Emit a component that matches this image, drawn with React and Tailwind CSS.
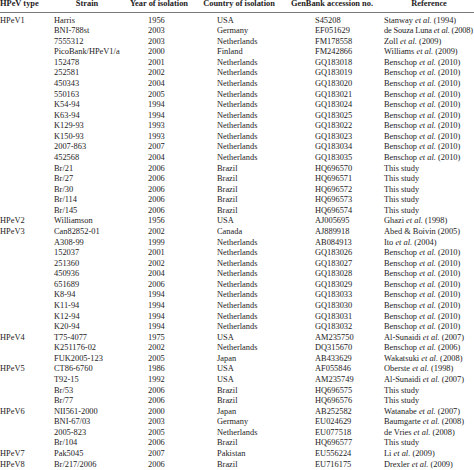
import React from "react";

const rows = [
  ["HPeV1", "Harris", "1956", "USA", "S45208", ["Stanway", " (1994)"]],
  ["", "BNI-788st", "2003", "Germany", "EF051629", ["de Souza Luna", " (2008)"]],
  ["", "7555312", "2003", "Netherlands", "FM178558", ["Zoll", " (2009)"]],
  ["", "PicoBank/HPeV1/a", "2000", "Finland", "FM242866", ["Williams", " (2009)"]],
  ["", "152478", "2001", "Netherlands", "GQ183018", ["Benschop", " (2010)"]],
  ["", "252581", "2002", "Netherlands", "GQ183019", ["Benschop", " (2010)"]],
  ["", "450343", "2004", "Netherlands", "GQ183020", ["Benschop", " (2010)"]],
  ["", "550163", "2005", "Netherlands", "GQ183021", ["Benschop", " (2010)"]],
  ["", "K54-94", "1994", "Netherlands", "GQ183024", ["Benschop", " (2010)"]],
  ["", "K63-94", "1994", "Netherlands", "GQ183025", ["Benschop", " (2010)"]],
  ["", "K129-93", "1993", "Netherlands", "GQ183022", ["Benschop", " (2010)"]],
  ["", "K150-93", "1993", "Netherlands", "GQ183023", ["Benschop", " (2010)"]],
  ["", "2007-863", "2007", "Netherlands", "GQ183034", ["Benschop", " (2010)"]],
  ["", "452568", "2004", "Netherlands", "GQ183035", ["Benschop", " (2010)"]],
  ["", "Br/21", "2006", "Brazil", "HQ696570", "This study"],
  ["", "Br/27", "2006", "Brazil", "HQ696571", "This study"],
  ["", "Br/30", "2006", "Brazil", "HQ696572", "This study"],
  ["", "Br/114", "2006", "Brazil", "HQ696573", "This study"],
  ["", "Br/145", "2006", "Brazil", "HQ696574", "This study"],
  ["HPeV2", "Williamson", "1956", "USA", "AJ005695", ["Ghazi", " (1998)"]],
  ["HPeV3", "Can82852-01", "2002", "Canada", "AJ889918", "Abed & Boivin (2005)"],
  ["", "A308-99", "1999", "Netherlands", "AB084913", ["Ito", " (2004)"]],
  ["", "152037", "2001", "Netherlands", "GQ183026", ["Benschop", " (2010)"]],
  ["", "251360", "2002", "Netherlands", "GQ183027", ["Benschop", " (2010)"]],
  ["", "450936", "2004", "Netherlands", "GQ183028", ["Benschop", " (2010)"]],
  ["", "651689", "2006", "Netherlands", "GQ183029", ["Benschop", " (2010)"]],
  ["", "K8-94", "1994", "Netherlands", "GQ183033", ["Benschop", " (2010)"]],
  ["", "K11-94", "1994", "Netherlands", "GQ183030", ["Benschop", " (2010)"]],
  ["", "K12-94", "1994", "Netherlands", "GQ183031", ["Benschop", " (2010)"]],
  ["", "K20-94", "1994", "Netherlands", "GQ183032", ["Benschop", " (2010)"]],
  ["HPeV4", "T75-4077", "1975", "USA", "AM235750", ["Al-Sunaidi", " (2007)"]],
  ["", "K251176-02", "2002", "Netherlands", "DQ315670", ["Benschop", " (2006)"]],
  ["", "FUK2005-123", "2005", "Japan", "AB433629", ["Wakatsuki", " (2008)"]],
  ["HPeV5", "CT86-6760", "1986", "USA", "AF055846", ["Oberste", " (1998)"]],
  ["", "T92-15", "1992", "USA", "AM235749", ["Al-Sunaidi", " (2007)"]],
  ["", "Br/53", "2006", "Brazil", "HQ696575", "This study"],
  ["", "Br/77", "2006", "Brazil", "HQ696576", "This study"],
  ["HPeV6", "NII561-2000", "2000", "Japan", "AB252582", ["Watanabe", " (2007)"]],
  ["", "BNI-67/03", "2003", "Germany", "EU024629", ["Baumgarte", " (2008)"]],
  ["", "2005-823", "2005", "Netherlands", "EU077518", ["de Vries", " (2008)"]],
  ["", "Br/104", "2006", "Brazil", "HQ696577", "This study"],
  ["HPeV7", "Pak5045", "2007", "Pakistan", "EU556224", ["Li", " (2009)"]],
  ["HPeV8", "Br/217/2006", "2006", "Brazil", "EU716175", ["Drexler", " (2009)"]],
];

function Ref({ r }) {
  if (typeof r === "string") return <>{r}</>;
  return (
    <>
      {r[0]} <i>et al.</i>
      {r[1]}
    </>
  );
}

const PITCH = 10.57;

export default function App() {
  return (
    <div
      className="w-[474px] h-[470px] overflow-hidden bg-white text-[#1e1b1c] text-[8.4px]"
      style={{ fontFamily: '"Liberation Serif", "Times New Roman", serif' }}
    >
      <div className="grid grid-cols-[54px_66px_78px_82px_104px_90px] font-bold leading-[8px] h-[13px] border-b border-[#7a7a7a] whitespace-nowrap">
        <div className="text-left">HPeV type</div>
        <div className="text-center">Strain</div>
        <div className="text-center">Year of isolation</div>
        <div className="text-center">Country of isolation</div>
        <div className="text-center">GenBank accession no.</div>
        <div className="text-center">Reference</div>
      </div>
      <div className="flex flex-col pt-[2px] whitespace-nowrap">
        {rows.map((r, i) => {
          const h = Math.round((i + 1) * PITCH) - Math.round(i * PITCH);
          return (
            <div
              key={i}
              className={
                h === 11
                  ? "grid grid-cols-[54px_94px_69px_98px_69px_90px] h-[11px] leading-[11px]"
                  : "grid grid-cols-[54px_94px_69px_98px_69px_90px] h-[10px] leading-[10px]"
              }
            >
              <div>{r[0]}</div>
              <div>{r[1]}</div>
              <div>{r[2]}</div>
              <div>{r[3]}</div>
              <div>{r[4]}</div>
              <div className={i === 1 ? "tracking-[-0.15px]" : ""}>
                <Ref r={r[5]} />
              </div>
            </div>
          );
        })}
      </div>
    </div>
  );
}
